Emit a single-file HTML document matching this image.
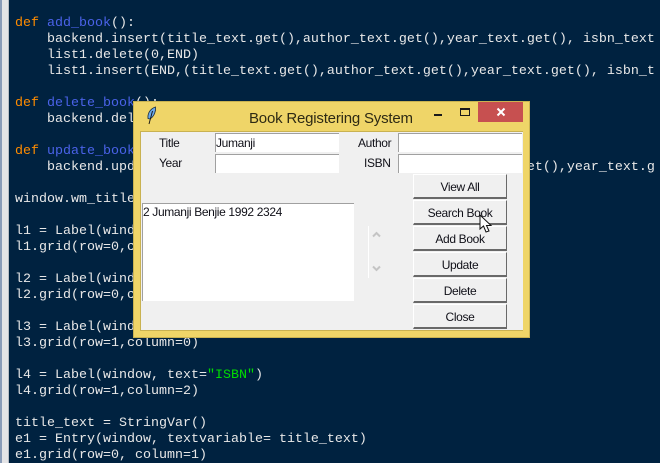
<!DOCTYPE html>
<html><head><meta charset="utf-8">
<style>
html,body{margin:0;padding:0;overflow:hidden}
body{width:660px;height:463px;overflow:hidden;background:#002240;position:relative}
.a{position:absolute}
#code{left:15px;top:16px;width:645px;height:447px;overflow:hidden;margin:0;font:13.333px/16px "Liberation Mono",monospace;color:#e8e8e8;white-space:pre}
.k{color:#ff8c00}.f{color:#4a62e8}.s{color:#00dd00}
.t{position:absolute;font:12px/16px "Liberation Sans",sans-serif;letter-spacing:-.35px;color:#101018;white-space:pre}
.e{position:absolute;background:#fff;box-sizing:border-box;border-top:1px solid #a0a0a0;border-left:1px solid #a0a0a0}
.b{position:absolute;left:413px;width:94px;height:25px;box-sizing:border-box;background:#f0f0f0;border-top:1px solid #fff;border-left:1px solid #fff;border-right:1px solid #696969;border-bottom:2px solid #696969;text-align:center;font:12px/24px "Liberation Sans",sans-serif;letter-spacing:-.35px;color:#101018}
</style></head><body>
<div class="a" style="left:0;top:0;width:2px;height:463px;background:#8a9cb8"></div>
<div class="a" style="left:2px;top:0;width:6px;height:463px;background:#e4e4e6"></div>
<div class="a" style="left:8px;top:0;width:1px;height:463px;background:#b8bcc4"></div>
<pre id="code" class="a"><span class="k">def</span> <span class="f">add_book</span>():
    backend.insert(title_text.get(),author_text.get(),year_text.get(), isbn_text
    list1.delete(0,END)
    list1.insert(END,(title_text.get(),author_text.get(),year_text.get(), isbn_t

<span class="k">def</span> <span class="f">delete_book</span>():
    backend.delete(selected_tuple[0])

<span class="k">def</span> <span class="f">update_book</span>():
    backend.update(selected_tu[0],title_text.get(),author_text.get(),year_text.g

window.wm_title("Book Registering System")

l1 = Label(window, text=<span class="s">"Title"</span>)
l1.grid(row=0,column=0)

l2 = Label(window, text=<span class="s">"Author"</span>)
l2.grid(row=0,column=2)

l3 = Label(window, text=<span class="s">"Year"</span>)
l3.grid(row=1,column=0)

l4 = Label(window, text=<span class="s">"ISBN"</span>)
l4.grid(row=1,column=2)

title_text = StringVar()
e1 = Entry(window, textvariable= title_text)
e1.grid(row=0, column=1)</pre>

<div class="a" style="left:133px;top:101px;width:397px;height:237px;box-sizing:border-box;background:#efd568;border:1px solid #c9b251"></div>
<div class="a" style="left:478px;top:102px;width:45px;height:20px;background:#c75050"></div>
<svg class="a" style="left:496px;top:107px" width="10" height="10" viewBox="0 0 10 10"><path d="M1.5 1.5L8.5 8.5M8.5 1.5L1.5 8.5" stroke="#fff" stroke-width="2"/></svg>
<div class="a" style="left:434px;top:114px;width:8px;height:2px;background:#1a1a1a"></div>
<div class="a" style="left:460px;top:108px;width:10px;height:8px;box-sizing:border-box;border:1px solid #1a1a1a;border-top-width:2px"></div>
<svg class="a" style="left:146px;top:106px" width="11" height="19" viewBox="0 0 11 19"><path d="M2 12.5C1.5 8 3.5 3 9.5 1C10 5 8.5 10 4 13Z" fill="#6aa8ea" stroke="#1a2a3a" stroke-width=".8"/><path d="M6.5 5L3 18" stroke="#111" stroke-width=".9"/></svg>
<div class="a" style="left:249px;top:109px;font:15px/20px 'Liberation Sans',sans-serif;letter-spacing:-.2px;color:#2e2a14;white-space:pre">Book Registering System</div>

<div class="a" style="left:140px;top:131px;width:383px;height:200px;box-sizing:border-box;background:#f0f0f0;border:1px solid #c9b251;border-right:0"></div>

<div class="t" style="left:159px;top:135px">Title</div>
<div class="t" style="left:159px;top:155px">Year</div>
<div class="t" style="left:358px;top:135px">Author</div>
<div class="t" style="left:364px;top:155px">ISBN</div>
<div class="e" style="left:215px;top:133px;width:124px;height:19px"></div>
<div class="t" style="left:216px;top:135px">Jumanji</div>
<div class="e" style="left:215px;top:154px;width:124px;height:19px"></div>
<div class="e" style="left:398px;top:133px;width:124px;height:19px"></div>
<div class="e" style="left:398px;top:154px;width:124px;height:19px"></div>

<div class="e" style="left:142px;top:203px;width:212px;height:98px"></div>
<div class="t" style="left:143px;top:204px">2 Jumanji Benjie 1992 2324</div>
<div class="a" style="left:368px;top:226px;width:1px;height:52px;background:#fff"></div>
<svg class="a" style="left:372px;top:230px" width="9" height="8" viewBox="0 0 9 8"><path d="M1 6.5L4.5 3L8 6.5" fill="none" stroke="#c4c4c4" stroke-width="2"/></svg>
<svg class="a" style="left:372px;top:265px" width="9" height="8" viewBox="0 0 9 8"><path d="M1 1.5L4.5 5L8 1.5" fill="none" stroke="#c4c4c4" stroke-width="2"/></svg>

<div class="b" style="top:174px">View All</div>
<div class="b" style="top:200px">Search Book</div>
<div class="b" style="top:226px">Add Book</div>
<div class="b" style="top:252px">Update</div>
<div class="b" style="top:278px">Delete</div>
<div class="b" style="top:304px">Close</div>

<svg class="a" style="left:479px;top:214px" width="14" height="20" viewBox="0 0 14 20"><path d="M1 1L1 15L4.5 12L7 18L10 17L7.5 11.5L12 11.5Z" fill="#fff" stroke="#111" stroke-width="1"/></svg>
</body></html>
